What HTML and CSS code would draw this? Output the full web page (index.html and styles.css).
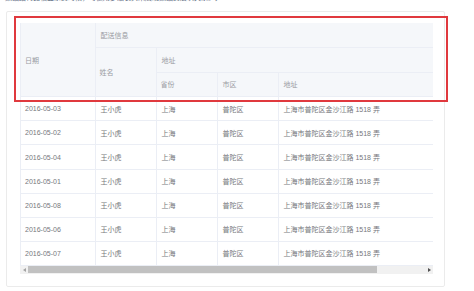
FILE: index.html
```html
<!DOCTYPE html>
<html lang="zh-CN">
<head>
    <meta charset="UTF-8">
    <title>多级表头</title>
    <link rel="stylesheet" href="styles.css">
</head>
<body>
    <p class="intro">数据结构比较复杂的时候，可使用多级表头来展现数据的层次关系。只需要在 el-table-column 里面嵌套 el-table-column 就可以实现多级表头。</p>

    <div class="demo-card">
        <div class="table-wrap">
            <table class="data-table">
                <colgroup>
                    <col class="col-date">
                    <col class="col-name">
                    <col class="col-short">
                    <col class="col-short">
                    <col class="col-address">
                    <col class="col-zip">
                </colgroup>
                <thead>
                    <tr>
                        <th rowspan="3">日期</th>
                        <th colspan="5">配送信息</th>
                    </tr>
                    <tr>
                        <th rowspan="2">姓名</th>
                        <th colspan="4">地址</th>
                    </tr>
                    <tr>
                        <th>省份</th>
                        <th>市区</th>
                        <th>地址</th>
                        <th>邮编</th>
                    </tr>
                </thead>
                <tbody id="rows"></tbody>
            </table>
        </div>

        <div class="scrollbar">
            <span class="scroll-arrow left"></span>
            <div class="scroll-track">
                <div class="scroll-thumb"></div>
            </div>
            <span class="scroll-arrow right"></span>
        </div>

        <!-- highlight box around the grouped header -->
        <div class="highlight"></div>
    </div>

    <script>
        const dates = ['2016-05-03', '2016-05-02', '2016-05-04', '2016-05-01', '2016-05-08', '2016-05-06', '2016-05-07'];
        const tbody = document.getElementById('rows');

        dates.forEach(date => {
            const tr = document.createElement('tr');
            [date, '王小虎', '上海', '普陀区', '上海市普陀区金沙江路 1518 弄', '200333'].forEach(text => {
                const td = document.createElement('td');
                td.textContent = text;
                tr.appendChild(td);
            });
            tbody.appendChild(tr);
        });
    </script>
</body>
</html>
```

FILE: styles.css
```css
* {
    margin: 0;
    padding: 0;
    box-sizing: border-box;
}

body {
    font-family: 'Liberation Sans', 'Noto Sans CJK SC', sans-serif;
    background: #fff;
    color: #606266;
}

.intro {
    font-size: 7px;
    line-height: 8px;
    color: #5e6d82;
    margin-top: -6px;
    padding-left: 5px;
    white-space: nowrap;
    overflow: hidden;
    width: 220px;
}

.demo-card {
    position: relative;
    margin: 9px 0 0 6px;
    width: 439px;
    height: 276px;
    border: 1px solid #ebebeb;
    border-radius: 2px;
    padding: 11px 0 0 13px;
}

.table-wrap {
    width: 413px;
    overflow: hidden;
    border-left: 1px solid #ebeef5;
}

.data-table {
    width: 467px;
    table-layout: fixed;
    border-collapse: collapse;
    font-size: 7px;
}

.col-date { width: 74px; }
.col-name { width: 61px; }
.col-short { width: 61px; }
.col-address { width: 155px; }
.col-zip { width: 55px; }

.data-table th,
.data-table td {
    text-align: left;
    padding: 0 5px;
    border-right: 1px solid #ebeef5;
    border-bottom: 1px solid #ebeef5;
    white-space: nowrap;
    overflow: hidden;
    vertical-align: middle;
}

.data-table th {
    height: 24.6px;
    background: #f5f7fa;
    color: #9a9ca3;
    font-weight: 400;
}

.data-table td {
    height: 24.1px;
    color: #76787d;
}

.data-table th:first-child,
.data-table td:first-child {
    padding-left: 4px;
}

.scrollbar {
    display: flex;
    width: 413px;
    height: 8px;
    background: #f1f1f1;
}

.scroll-arrow {
    width: 8px;
    display: flex;
    align-items: center;
    justify-content: center;
}

.scroll-arrow::before {
    content: "";
    border-top: 2px solid transparent;
    border-bottom: 2px solid transparent;
}

.scroll-arrow.left::before {
    border-right: 3px solid #a3a3a3;
}

.scroll-arrow.right::before {
    border-left: 3px solid #505050;
}

.scroll-track {
    flex: 1;
    display: flex;
    align-items: center;
}

.scroll-thumb {
    width: 349px;
    height: 7px;
    background: #c1c1c1;
}

.highlight {
    position: absolute;
    left: 7px;
    top: 4px;
    width: 434px;
    height: 86px;
    border: 2px solid #e0393e;
    pointer-events: none;
}
```
